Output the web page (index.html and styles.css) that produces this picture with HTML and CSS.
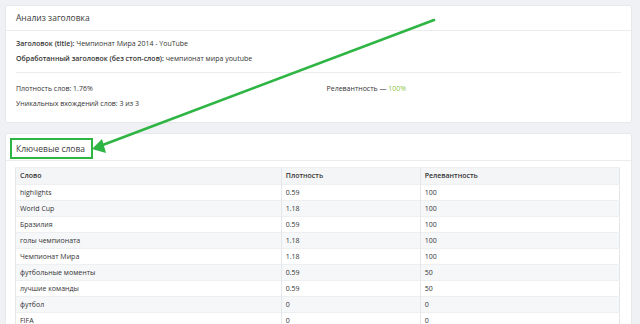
FILE: index.html
```html
<!DOCTYPE html>
<html lang="ru">
<head>
    <meta charset="UTF-8">
    <title>Анализ заголовка</title>
    <link rel="stylesheet" href="styles.css">
</head>
<body>

    <div class="card">
        <div class="card-head">Анализ заголовка</div>
        <div class="card-body">
            <p><b>Заголовок (title):</b> Чемпионат Мира 2014 - YouTube</p>
            <p><b>Обработанный заголовок (без стоп-слов):</b> чемпионат мира youtube</p>
            <hr>
            <div class="stats">
                <div>
                    <p>Плотность слов: 1.76%</p>
                    <p>Уникальных вхождений слов: 3 из 3</p>
                </div>
                <div>
                    <p>Релевантность — <span class="good">100%</span></p>
                </div>
            </div>
        </div>
    </div>

    <div class="card">
        <div class="card-head tall"><span class="marked">Ключевые слова</span></div>
        <div class="card-body table-wrap">
            <table class="keywords">
                <thead>
                    <tr><th>Слово</th><th>Плотность</th><th>Релевантность</th></tr>
                </thead>
                <tbody>
                    <tr><td>highlights</td><td>0.59</td><td>100</td></tr>
                    <tr><td>World Cup</td><td>1.18</td><td>100</td></tr>
                    <tr><td>Бразилия</td><td>0.59</td><td>100</td></tr>
                    <tr><td>голы чемпионата</td><td>1.18</td><td>100</td></tr>
                    <tr><td>Чемпионат Мира</td><td>1.18</td><td>100</td></tr>
                    <tr><td>футбольные моменты</td><td>0.59</td><td>50</td></tr>
                    <tr><td>лучшие команды</td><td>0.59</td><td>50</td></tr>
                    <tr><td>футбол</td><td>0</td><td>0</td></tr>
                    <tr><td>FIFA</td><td>0</td><td>0</td></tr>
                </tbody>
            </table>
        </div>
    </div>

    <!-- annotation arrow over the page -->
    <svg class="pointer" width="640" height="324" viewBox="0 0 640 324">
        <line x1="434" y1="20" x2="100" y2="146" stroke="#2fb544" stroke-width="2.6" stroke-linecap="round"/>
        <polygon points="92,149 102,139 106,153" fill="#2fb544"/>
    </svg>

</body>
</html>
```

FILE: styles.css
```css
/* Page and cards */
body {
    font-family: "Open Sans", "DejaVu Sans", sans-serif;
    font-size: 7px;
    color: #333;
    margin: 0;
    padding: 5px 8px 0 5px;
    background-color: #f0f1f4;
    position: relative;
}
.card {
    background-color: #fff;
    border: 1px solid #e7e8eb;
    border-radius: 3px;
    margin-bottom: 10px;
}
.card-head {
    height: 24px;
    line-height: 24px;
    padding: 0 10px;
    font-size: 8.5px;
    color: #3a3a3a;
    border-bottom: 1px solid #ececef;
}
.card-head.tall {
    height: 26px;
}
.card-body {
    padding: 5px 10px 11px;
}
.card-body p {
    margin: 0;
    line-height: 15px;
}
.card-body b {
    font-weight: 600;
}
.card-body hr {
    border: none;
    border-top: 1px solid #ededf0;
    margin: 6px 0 8px;
}
.stats {
    display: grid;
    grid-template-columns: 1fr 1fr;
    column-gap: 16px;
}
.good {
    color: #8cc63f;
}

/* Highlighted heading (annotation) */
.marked {
    display: inline-block;
    border: 2px solid #2fb544;
    padding: 0 6px 0 4px;
    margin-left: -6px;
    margin-top: 4px;
    line-height: 17px;
}

/* Keywords table */
.table-wrap {
    padding: 6px 11px 0 9px;
}
.keywords {
    width: 100%;
    border-collapse: collapse;
    border: 1px solid #e4e5e8;
}
.keywords th, .keywords td {
    text-align: left;
    padding: 0 4px;
    height: 15px;
    line-height: 15px;
    border-left: 1px solid #e6e7ea;
    border-top: 1px solid #eeeff1;
}
.keywords th {
    font-weight: 600;
    height: 16px;
    line-height: 16px;
    background-color: #f4f5f7;
}
.keywords th:nth-child(1) { width: 44%; }
.keywords th:nth-child(2) { width: 23%; }
.keywords tbody tr:nth-child(even) {
    background-color: #f6f7f9;
}

.pointer {
    position: absolute;
    left: 0;
    top: 0;
}
```
